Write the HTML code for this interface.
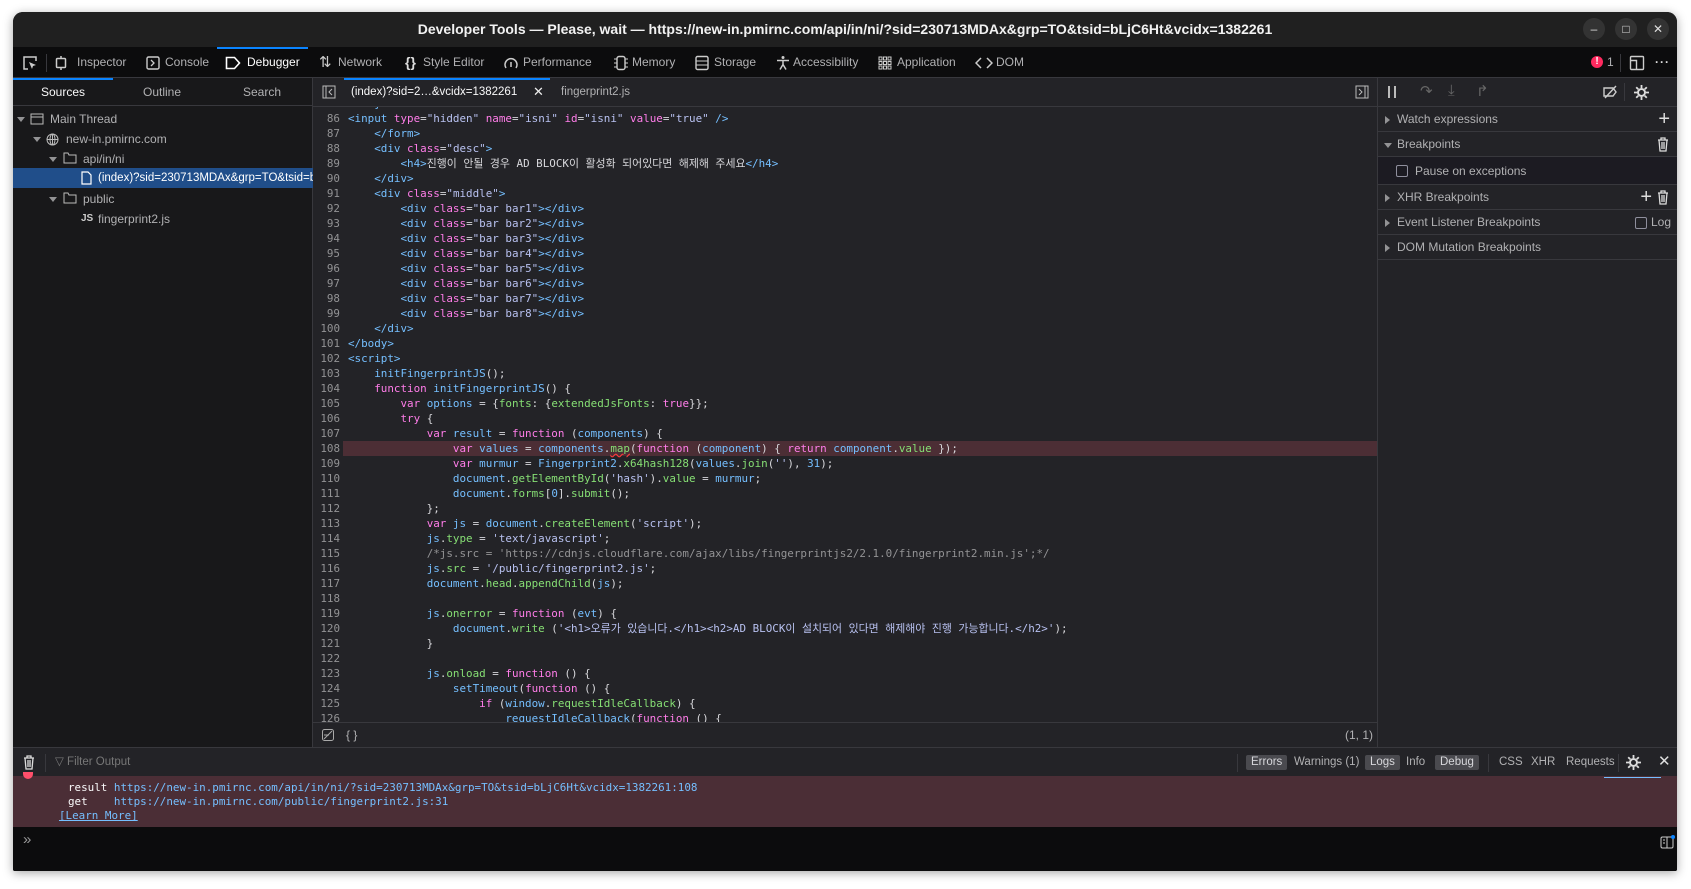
<!DOCTYPE html>
<html><head><meta charset="utf-8"><style>
*{margin:0;padding:0;box-sizing:border-box}
body{width:1691px;height:889px;background:#fff;position:relative;overflow:hidden;font-family:"Liberation Sans","DejaVu Sans",sans-serif;font-size:12px;color:#b1b1b3}
.win{position:absolute;left:13px;top:12px;width:1664px;height:859px;background:#0c0c0d;border-radius:10px 10px 2px 2px;overflow:hidden;box-shadow:0 2px 10px rgba(0,0,0,.35)}
.a{position:absolute}
.title{left:0;top:0;width:1664px;height:35px;background:#202020;color:#f2f2f2;font-weight:bold;font-size:14px;text-align:center;line-height:35px}
.wb{width:22px;height:22px;border-radius:11px;background:#333;top:6px;color:#ddd;font-size:12px;text-align:center;line-height:22px;font-weight:normal}
.tb{top:35px;left:0;width:1664px;height:31px;background:#0c0c0d;border-bottom:1px solid #38383d}
.tab{top:0;height:31px;line-height:31px;color:#b1b1b3;font-size:12px}
.mono{font-family:"DejaVu Sans Mono","Liberation Mono","Noto Sans CJK KR",monospace}
.left{left:0;top:66px;width:300px;height:669px;background:#18181a;border-right:1px solid #38383d}
.row{height:28px;line-height:28px;border-bottom:1px solid #38383d}
.code{left:300px;top:66px;width:1064px;height:669px;background:#232327;overflow:hidden}
.right{left:1364px;top:66px;width:300px;height:669px;background:#232327;border-left:1px solid #38383d}
.ln{position:absolute;left:0;width:27px;text-align:right;color:#939395}
.cl{position:absolute;left:35px;white-space:pre;color:#d7d7db}
.k{color:#ff7de9}.i{color:#75bfff}.p{color:#86de74}.s{color:#b8c1f0}.c{color:#939395}.t{color:#75bfff}
.rr{position:absolute;left:0;width:300px;height:25px;line-height:25px;border-bottom:1px solid #38383d;padding-left:19px;color:#b1b1b3}
.tri{position:absolute;left:7px;top:9px;width:0;height:0;border-top:4px solid transparent;border-bottom:4px solid transparent;border-left:5px solid #939395}
.trd{position:absolute;left:6px;top:11px;width:0;height:0;border-left:4px solid transparent;border-right:4px solid transparent;border-top:5px solid #939395}
.cb{position:absolute;width:12px;height:12px;border:1.5px solid #8f8f9d;border-radius:2px}
.pill{position:absolute;top:7px;background:#4a4a4f;color:#d7d7db;padding:0 5px;border-radius:2px;line-height:15px;font-size:11.5px}
.ct{position:absolute;top:0;font-size:11.5px}
</style></head><body>
<div class="win">
 <div class="a title">Developer Tools — Please, wait — https://new-in.pmirnc.com/api/in/ni/?sid=230713MDAx&amp;grp=TO&amp;tsid=bLjC6Ht&amp;vcidx=1382261
  <div class="a wb" style="left:1570px">–</div><div class="a wb" style="left:1602px">□</div><div class="a wb" style="left:1634px">✕</div>
 </div>
 <div class="a tb">
  <svg class="a" style="left:9px;top:8px" width="16" height="16" viewBox="0 0 16 16"><path d="M6 14H2V2h12v4" fill="none" stroke="#ccc" stroke-width="1.5"/><path d="M7 7l7 3-3 1-1 3z" fill="#ccc"/></svg>
  <div class="a" style="left:33px;top:7px;width:1px;height:18px;background:#38383d"></div>
  <div class="a" style="left:204px;top:0;width:91px;height:2px;background:#0a84ff"></div>
  <svg class="a" style="left:41px;top:9px" width="14" height="14"><rect x="2.5" y="2.5" width="9" height="9" rx="1" fill="none" stroke="#ccc" stroke-width="1.5"/><path d="M7 0v2M7 12v2" stroke="#ccc" stroke-width="1.5"/></svg>
  <div class="a tab" style="left:64px">Inspector</div>
  <svg class="a" style="left:133px;top:9px" width="14" height="14"><rect x="1" y="1" width="12" height="12" rx="1.5" fill="none" stroke="#ccc" stroke-width="1.4"/><path d="M5 4l3 3-3 3" fill="none" stroke="#ccc" stroke-width="1.3"/></svg>
  <div class="a tab" style="left:152px">Console</div>
  <svg class="a" style="left:212px;top:9px" width="16" height="14"><path d="M1.5 1.5h8l5 5.5-5 5.5h-8z" fill="none" stroke="#fff" stroke-width="1.6"/></svg>
  <div class="a tab" style="left:234px;color:#fff">Debugger</div>
  <div class="a tab" style="left:306px;font-size:15px;color:#ccc">⇅</div>
  <div class="a tab" style="left:325px">Network</div>
  <div class="a tab" style="left:392px;font-size:14px;color:#ddd;font-weight:bold">{}</div>
  <div class="a tab" style="left:410px">Style Editor</div>
  <svg class="a" style="left:490px;top:8px" width="16" height="16"><path d="M3 13A6 6 0 1 1 13 13" fill="none" stroke="#ccc" stroke-width="1.5"/><path d="M8 12V7" stroke="#ccc" stroke-width="1.5"/></svg>
  <div class="a tab" style="left:510px">Performance</div>
  <svg class="a" style="left:600px;top:8px" width="16" height="16"><rect x="4" y="1.5" width="8" height="13" rx="2" fill="none" stroke="#ccc" stroke-width="1.4"/><path d="M1 4h3M1 8h3M1 12h3M12 4h3M12 8h3M12 12h3" stroke="#ccc"/></svg>
  <div class="a tab" style="left:619px">Memory</div>
  <svg class="a" style="left:682px;top:8px" width="14" height="16"><rect x="1" y="1.5" width="12" height="13" rx="1.5" fill="none" stroke="#ccc" stroke-width="1.4"/><path d="M1 6h12M1 10h12" stroke="#ccc"/></svg>
  <div class="a tab" style="left:701px">Storage</div>
  <svg class="a" style="left:763px;top:8px" width="14" height="16"><circle cx="7" cy="2.5" r="1.5" fill="#ccc"/><path d="M1 5.5h12M7 5.5v4M7 9.5l-3 5M7 9.5l3 5" stroke="#ccc" stroke-width="1.5" fill="none"/></svg>
  <div class="a tab" style="left:780px">Accessibility</div>
  <svg class="a" style="left:865px;top:9px" width="14" height="14"><g fill="none" stroke="#ccc"><rect x="1" y="1" width="3" height="3"/><rect x="5.5" y="1" width="3" height="3"/><rect x="10" y="1" width="3" height="3"/><rect x="1" y="5.5" width="3" height="3"/><rect x="5.5" y="5.5" width="3" height="3"/><rect x="10" y="5.5" width="3" height="3"/><rect x="1" y="10" width="3" height="3"/><rect x="5.5" y="10" width="3" height="3"/><rect x="10" y="10" width="3" height="3"/></g></svg>
  <div class="a tab" style="left:884px">Application</div>
  <svg class="a" style="left:962px;top:9px" width="18" height="14"><path d="M6 2L1 7l5 5M12 2l5 5-5 5" fill="none" stroke="#ccc" stroke-width="1.5"/></svg>
  <div class="a tab" style="left:983px">DOM</div>
  <div class="a" style="left:1578px;top:9px;width:12px;height:12px;border-radius:6px;background:#ff2a5f;color:#fff;font-size:10px;font-weight:bold;text-align:center;line-height:12px">!</div>
  <div class="a tab" style="left:1594px">1</div>
  <div class="a" style="left:1607px;top:7px;width:1px;height:18px;background:#38383d"></div>
  <svg class="a" style="left:1616px;top:8px" width="16" height="16"><rect x="1.5" y="1.5" width="13" height="13" rx="1" fill="none" stroke="#ccc" stroke-width="1.4"/><path d="M1.5 5.5h6v9" fill="none" stroke="#ccc" stroke-width="1.4"/></svg>
  <div class="a tab" style="left:1642px;color:#ddd;font-weight:bold;letter-spacing:1px">···</div>
 </div>
 <div class="a left">
  <div class="row" style="position:relative;background:#18181a">
   <div class="a" style="left:0;top:0;width:100px;height:2px;background:#0a84ff"></div>
   <div class="a" style="left:28px;color:#f9f9fa">Sources</div>
   <div class="a" style="left:130px">Outline</div>
   <div class="a" style="left:230px">Search</div>
  </div>
  <div style="position:relative;height:600px">
   <div class="trd" style="left:4px;top:11px"></div>
   <svg class="a" style="left:17px;top:7px" width="14" height="12"><rect x="1" y="1" width="12" height="10" fill="none" stroke="#bbb"/><path d="M1 4h12" stroke="#bbb"/></svg>
   <div class="a" style="left:37px;top:2px;line-height:22px">Main Thread</div>
   <div class="trd" style="left:20px;top:31px"></div>
   <svg class="a" style="left:33px;top:27px" width="13" height="13"><circle cx="6.5" cy="6.5" r="5.5" fill="none" stroke="#bbb"/><path d="M1 6.5h11M6.5 1v11" stroke="#bbb"/><ellipse cx="6.5" cy="6.5" rx="2.5" ry="5.5" fill="none" stroke="#bbb"/></svg>
   <div class="a" style="left:53px;top:22px;line-height:22px">new-in.pmirnc.com</div>
   <div class="trd" style="left:36px;top:51px"></div>
   <svg class="a" style="left:50px;top:46px" width="14" height="12"><path d="M1 1h4l1 2h7v8H1z" fill="none" stroke="#bbb"/></svg>
   <div class="a" style="left:70px;top:42px;line-height:22px">api/in/ni</div>
   <div class="a" style="left:0;top:62px;width:300px;height:20px;background:#204e8a"></div>
   <svg class="a" style="left:68px;top:65px" width="11" height="14"><path d="M1 1h6l3 3v9H1z" fill="none" stroke="#fff" stroke-width="1.2"/></svg>
   <div class="a" style="left:85px;top:61px;line-height:22px;color:#fff;white-space:nowrap;font-size:11.5px">(index)?sid=230713MDAx&amp;grp=TO&amp;tsid=bL</div>
   <div class="trd" style="left:36px;top:91px"></div>
   <svg class="a" style="left:50px;top:86px" width="14" height="12"><path d="M1 1h4l1 2h7v8H1z" fill="none" stroke="#bbb"/></svg>
   <div class="a" style="left:70px;top:82px;line-height:22px">public</div>
   <div class="a" style="left:68px;top:102px;line-height:22px;font-weight:bold;font-size:10px;color:#ccc">JS</div>
   <div class="a" style="left:85px;top:102px;line-height:22px">fingerprint2.js</div>
  </div>
 </div>
 <div class="a code">
  <div class="a" style="left:0;top:0;width:1064px;height:29px;border-bottom:1px solid #38383d;background:#232327">
   <svg class="a" style="left:9px;top:7px" width="14" height="14"><rect x="1" y="1" width="12" height="12" fill="none" stroke="#bbb"/><path d="M4 1v12M10 4l-3 3 3 3" fill="none" stroke="#bbb"/></svg>
   <div class="a" style="left:31px;top:0;width:206px;height:2px;background:#0a84ff"></div>
   <div class="a" style="left:38px;line-height:28px;color:#f9f9fa;font-size:11.5px">(index)?sid=2…&amp;vcidx=1382261</div>
   <div class="a" style="left:220px;line-height:27px;color:#eee;font-size:13px">✕</div>
   <div class="a" style="left:248px;line-height:28px;font-size:11.5px">fingerprint2.js</div>
   <svg class="a" style="left:1042px;top:7px" width="14" height="14"><rect x="1" y="1" width="12" height="12" fill="none" stroke="#bbb"/><path d="M10 1v12M4 4l3 3-3 3" fill="none" stroke="#bbb"/></svg>
  </div>
  <div class="a mono" style="left:0;top:29px;width:1064px;height:615px;overflow:hidden;font-size:10.9px;line-height:15px">
   <div class="a" style="left:30px;top:334px;width:1034px;height:15px;background:#4c2e35"></div>
   <div id="L"></div>
  </div>
  <div class="a" style="left:0;top:644px;width:1064px;height:25px;border-top:1px solid #38383d;line-height:24px">
   <svg class="a" style="left:8px;top:5px" width="14" height="14"><rect x="1.5" y="1.5" width="11" height="11" rx="2" fill="none" stroke="#aaa"/><path d="M3 11L11 3M3 7h5" stroke="#aaa"/></svg>
   <div class="a" style="left:33px">{ }</div>
   <div class="a" style="left:1032px">(1, 1)</div>
  </div>
 </div>
 <div class="a right">
  <div class="a" style="left:0;top:0;width:300px;height:29px;border-bottom:1px solid #38383d">
   <div class="a" style="left:10px;top:8px;width:1.5px;height:12px;background:#bbb"></div><div class="a" style="left:16px;top:8px;width:1.5px;height:12px;background:#bbb"></div>
   <div class="a" style="left:42px;top:4px;color:#666;font-size:15px">↷</div>
   <div class="a" style="left:70px;top:4px;color:#666;font-size:15px">⤓</div>
   <div class="a" style="left:98px;top:4px;color:#666;font-size:15px">↱</div>
   <svg class="a" style="left:224px;top:6px" width="16" height="16"><path d="M2 4h9l3 4-3 4H2z" fill="none" stroke="#ccc" stroke-width="1.4"/><path d="M3 14L14 2" stroke="#ccc" stroke-width="1.4"/></svg>
   <div class="a" style="left:246px;top:5px;width:1px;height:18px;background:#38383d"></div>
   <svg class="a" style="left:255px;top:6px" width="17" height="17" viewBox="0 0 17 17"><circle cx="8.5" cy="8.5" r="3.5" fill="none" stroke="#ddd" stroke-width="2"/><path d="M8.5 1v3M8.5 13v3M1 8.5h3M13 8.5h3M3.2 3.2l2.1 2.1M11.7 11.7l2.1 2.1M3.2 13.8l2.1-2.1M11.7 5.3l2.1-2.1" stroke="#ddd" stroke-width="1.8"/></svg>
  </div>
  <div class="rr" style="top:29px"><div class="tri"></div>Watch expressions<div class="a" style="right:8px;top:0;font-size:20px;color:#ddd">+</div></div>
  <div class="rr" style="top:54px"><div class="trd"></div>Breakpoints<svg class="a" style="right:9px;top:5px" width="12" height="15"><path d="M1 3h10M4 3V1h4v2M2 3l1 11h6l1-11M5 5v7M7 5v7" fill="none" stroke="#ddd" stroke-width="1.3"/></svg></div>
  <div class="rr" style="top:79px;height:28px;line-height:28px;background:#1c1b22;padding-left:37px"><div class="cb" style="left:18px;top:8px"></div>Pause on exceptions</div>
  <div class="rr" style="top:107px"><div class="tri"></div>XHR Breakpoints<div class="a" style="right:26px;top:0;font-size:20px;color:#ddd">+</div><svg class="a" style="right:9px;top:5px" width="12" height="15"><path d="M1 3h10M4 3V1h4v2M2 3l1 11h6l1-11M5 5v7M7 5v7" fill="none" stroke="#ddd" stroke-width="1.3"/></svg></div>
  <div class="rr" style="top:132px"><div class="tri"></div>Event Listener Breakpoints<div class="cb" style="left:257px;top:7px"></div><div class="a" style="left:273px;top:0">Log</div></div>
  <div class="rr" style="top:157px"><div class="tri"></div>DOM Mutation Breakpoints</div>
 </div>
 <div class="a" style="left:0;top:735px;width:1664px;height:29px;background:#232327;border-top:1px solid #38383d;line-height:28px">
  <svg class="a" style="left:10px;top:7px" width="12" height="15"><path d="M1 3h10M4 3V1h4v2M2 3l1 11h6l1-11M5 5v7M7 5v7" fill="none" stroke="#ddd" stroke-width="1.3"/></svg>
  <div class="a" style="left:32px;top:6px;width:1px;height:18px;background:#38383d"></div>
  <div class="a" style="left:42px;color:#777;font-size:11.5px">▽ Filter Output</div>
  <div class="a" style="left:1224px;top:6px;width:1px;height:18px;background:#38383d"></div>
  <div class="pill" style="left:1233px">Errors</div>
  <div class="ct" style="left:1281px">Warnings (1)</div>
  <div class="pill" style="left:1352px">Logs</div>
  <div class="ct" style="left:1393px">Info</div>
  <div class="pill" style="left:1422px">Debug</div>
  <div class="a" style="left:1475px;top:6px;width:1px;height:18px;background:#38383d"></div>
  <div class="ct" style="left:1486px">CSS</div><div class="ct" style="left:1518px">XHR</div><div class="ct" style="left:1553px">Requests</div>
  <div class="a" style="left:1605px;top:6px;width:1px;height:18px;background:#38383d"></div>
  <svg class="a" style="left:1612px;top:6px" width="17" height="17" viewBox="0 0 17 17"><circle cx="8.5" cy="8.5" r="3.5" fill="none" stroke="#ddd" stroke-width="2"/><path d="M8.5 1v3M8.5 13v3M1 8.5h3M13 8.5h3M3.2 3.2l2.1 2.1M11.7 11.7l2.1 2.1M3.2 13.8l2.1-2.1M11.7 5.3l2.1-2.1" stroke="#ddd" stroke-width="1.8"/></svg>
  <div class="a" style="left:1645px;font-size:15px;color:#ddd">✕</div>
 </div>
 <div class="a mono" style="left:0;top:764px;width:1664px;height:51px;background:#4b2e36;font-size:10.9px;line-height:14px;color:#f9f9fa;white-space:pre">
  <div class="a" style="left:10px;top:-4px;width:10px;height:7px;border-radius:0 0 5px 5px;background:#ff4f6b"></div>
  <div class="a" style="left:55px;top:5px">result <span style="color:#75bfff">https://new-in.pmirnc.com/api/in/ni/?sid=230713MDAx&amp;grp=TO&amp;tsid=bLjC6Ht&amp;vcidx=1382261:108</span></div>
  <div class="a" style="left:55px;top:19px">get    <span style="color:#75bfff">https://new-in.pmirnc.com/public/fingerprint2.js:31</span></div>
  <div class="a" style="left:46px;top:33px;color:#75bfff;text-decoration:underline">[Learn More]</div>
  <div class="a" style="left:1591px;top:1px;width:57px;height:1px;background:#75bfff"></div>
 </div>
 <div class="a" style="left:0;top:815px;width:1664px;height:44px;background:#0c0c0d">
  <div class="a" style="left:10px;top:4px;color:#999;font-size:15px">»</div>
  <svg class="a" style="left:1647px;top:8px" width="15" height="14"><rect x="1" y="2" width="12" height="11" rx="1.5" fill="none" stroke="#ccc"/><path d="M7 2v11M3 5h2M3 8h2" stroke="#ccc"/><circle cx="13" cy="2" r="2" fill="#0a84ff"/></svg>
 </div>
</div>
<script>
var k=s=>'<span class="k">'+s+'</span>',i=s=>'<span class="i">'+s+'</span>',p=s=>'<span class="p">'+s+'</span>',st=s=>'<span class="s">'+s+'</span>',c=s=>'<span class="c">'+s+'</span>',t=s=>'<span class="t">'+s+'</span>';
function tag(n,cls){return t('&lt;'+n)+' '+k('class')+'='+st('"'+cls+'"')+t('&gt;');}
var sp=n=>' '.repeat(n);
var L=[
[85,sp(4)+t('}')],
[86,t('&lt;input')+' '+k('type')+'='+st('"hidden"')+' '+k('name')+'='+st('"isni"')+' '+k('id')+'='+st('"isni"')+' '+k('value')+'='+st('"true"')+' '+t('/&gt;')],
[87,sp(4)+t('&lt;/form&gt;')],
[88,sp(4)+tag('div','desc')],
[89,sp(8)+t('&lt;h4&gt;')+'진행이 안될 경우 AD BLOCK이 활성화 되어있다면 해제해 주세요'+t('&lt;/h4&gt;')],
[90,sp(4)+t('&lt;/div&gt;')],
[91,sp(4)+tag('div','middle')]];
for(var b=1;b<=8;b++)L.push([91+b,sp(8)+tag('div','bar bar'+b)+t('&lt;/div&gt;')]);
L=L.concat([
[100,sp(4)+t('&lt;/div&gt;')],
[101,t('&lt;/body&gt;')],
[102,t('&lt;script&gt;')],
[103,sp(4)+i('initFingerprintJS')+'();'],
[104,sp(4)+k('function')+' '+i('initFingerprintJS')+'() {'],
[105,sp(8)+k('var')+' '+i('options')+' = {'+p('fonts')+': {'+p('extendedJsFonts')+': '+k('true')+'}};'],
[106,sp(8)+k('try')+' {'],
[107,sp(12)+k('var')+' '+i('result')+' = '+k('function')+' ('+i('components')+') {'],
[108,sp(16)+k('var')+' '+i('values')+' = '+i('components')+'.'+p('<span style="text-decoration:underline wavy #ff3b3b">map</span>')+'('+k('function')+' ('+i('component')+') { '+k('return')+' '+i('component')+'.'+p('value')+' });'],
[109,sp(16)+k('var')+' '+i('murmur')+' = '+i('Fingerprint2')+'.'+p('x64hash128')+'('+i('values')+'.'+p('join')+'('+st("''")+'), '+i('31')+');'],
[110,sp(16)+i('document')+'.'+p('getElementById')+'('+st("'hash'")+').'+p('value')+' = '+i('murmur')+';'],
[111,sp(16)+i('document')+'.'+p('forms')+'['+i('0')+'].'+p('submit')+'();'],
[112,sp(12)+'};'],
[113,sp(12)+k('var')+' '+i('js')+' = '+i('document')+'.'+p('createElement')+'('+st("'script'")+');'],
[114,sp(12)+i('js')+'.'+p('type')+' = '+st("'text/javascript'")+';'],
[115,sp(12)+c("/*js.src = 'https://cdnjs.cloudflare.com/ajax/libs/fingerprintjs2/2.1.0/fingerprint2.min.js';*/")],
[116,sp(12)+i('js')+'.'+p('src')+' = '+st("'/public/fingerprint2.js'")+';'],
[117,sp(12)+i('document')+'.'+p('head')+'.'+p('appendChild')+'('+i('js')+');'],
[118,''],
[119,sp(12)+i('js')+'.'+p('onerror')+' = '+k('function')+' ('+i('evt')+') {'],
[120,sp(16)+i('document')+'.'+p('write')+' ('+st("'&lt;h1&gt;오류가 있습니다.&lt;/h1&gt;&lt;h2&gt;AD BLOCK이 설치되어 있다면 해제해야 진행 가능합니다.&lt;/h2&gt;'")+');'],
[121,sp(12)+'}'],
[122,''],
[123,sp(12)+i('js')+'.'+p('onload')+' = '+k('function')+' () {'],
[124,sp(16)+i('setTimeout')+'('+k('function')+' () {'],
[125,sp(20)+k('if')+' ('+i('window')+'.'+p('requestIdleCallback')+') {'],
[126,sp(24)+i('requestIdleCallback')+'('+k('function')+' () {']
]);
var h='';L.forEach(function(r){var y=(r[0]-86)*15+4;h+='<div class="ln" style="top:'+y+'px">'+r[0]+'</div><div class="cl" style="top:'+y+'px">'+r[1]+'</div>';});
document.getElementById('L').innerHTML=h;
</script>
</body></html>
